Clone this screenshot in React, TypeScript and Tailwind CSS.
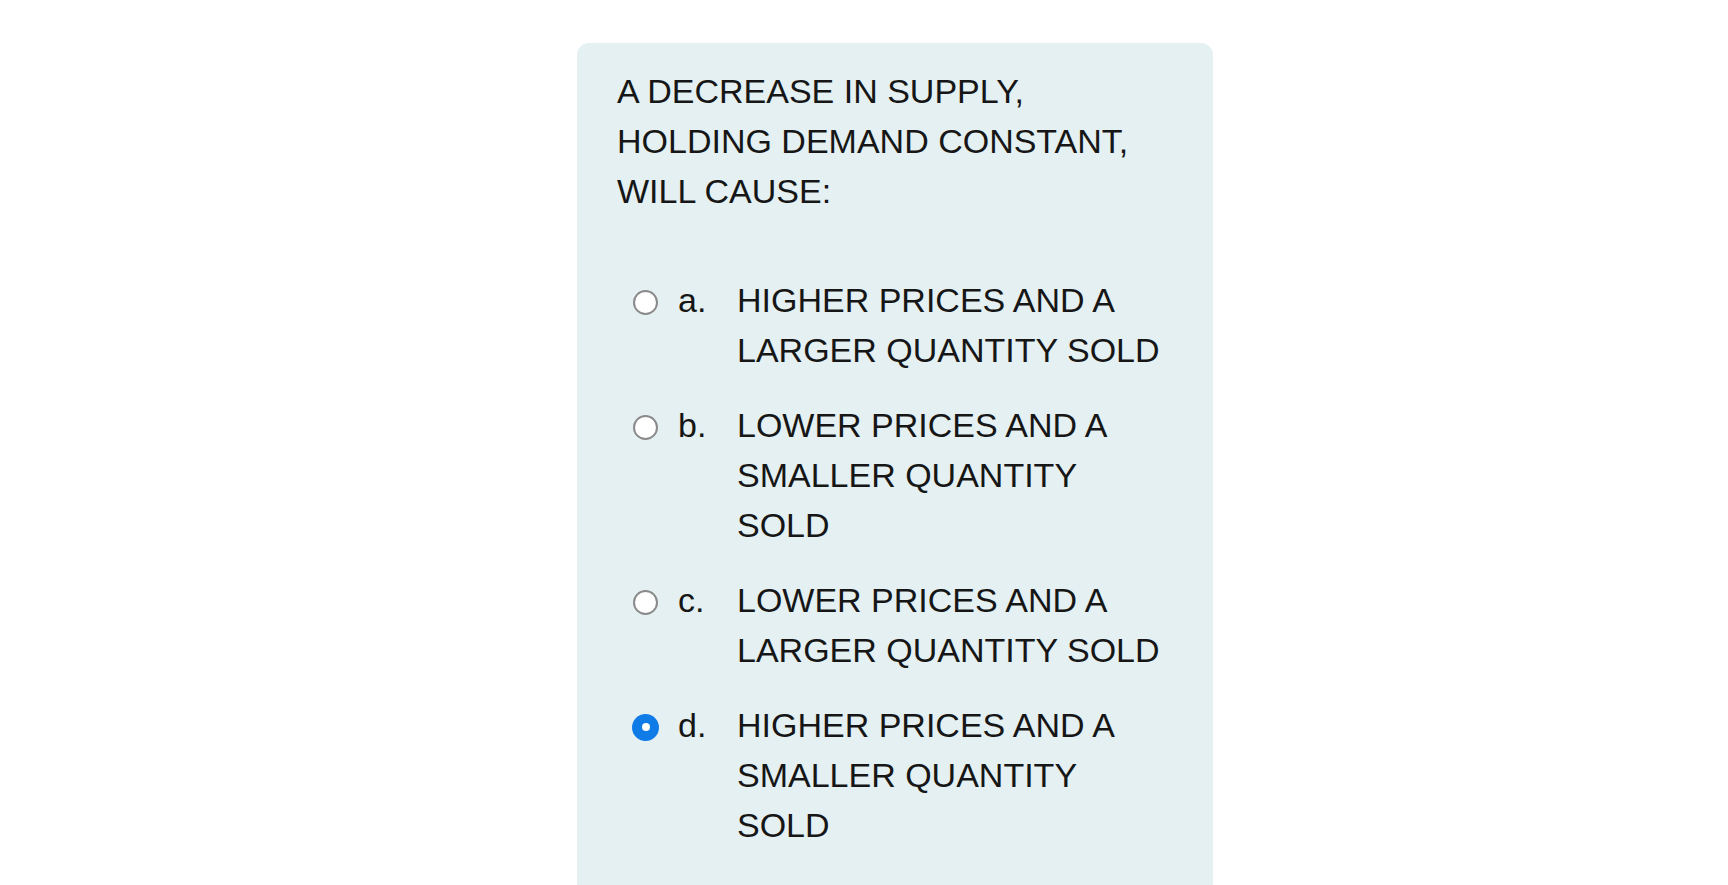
import React, { FC } from "react";

type Choice = {
  key: string;
  text: string;
  checked?: boolean;
};

const choices: Choice[] = [
  { key: "a.", text: "HIGHER PRICES AND A LARGER QUANTITY SOLD" },
  { key: "b.", text: "LOWER PRICES AND A SMALLER QUANTITY SOLD" },
  { key: "c.", text: "LOWER PRICES AND A LARGER QUANTITY SOLD" },
  { key: "d.", text: "HIGHER PRICES AND A SMALLER QUANTITY SOLD", checked: true },
];

// radio dot, drawn with plain spans inside a fixed 27px slot
const Radio: FC<{ checked?: boolean }> = ({ checked }) => (
  <span className="flex h-[50px] w-[27px] shrink-0 items-center justify-center pt-[4px]">
    {checked ? (
      <span className="flex size-[27px] items-center justify-center rounded-full bg-[#0f7be6]">
        <span className="size-[8px] rounded-full bg-white" />
      </span>
    ) : (
      <span className="size-[25px] rounded-full border-[2.5px] border-[#8a8a8a] bg-white" />
    )}
  </span>
);

const App: FC = () => {
  return (
    <div className="min-h-screen bg-white pl-[577px] pt-[43px] font-['Liberation_Sans',Arial,sans-serif]">
      <div className="w-[636px] rounded-xl bg-[#e4f0f2] px-10 pt-[23px] pb-16 text-[34px] leading-[50px] text-[#161616]">
        <p>A DECREASE IN SUPPLY, HOLDING DEMAND CONSTANT, WILL CAUSE:</p>

        <ul className="mt-[59px] flex flex-col gap-[25px] pl-[15px]">
          {choices.map((c) => (
            <li key={c.key} className="flex items-start">
              <Radio checked={c.checked} />
              <span className="ml-[19px] w-[59px] shrink-0">{c.key}</span>
              <span className="flex-1">{c.text}</span>
            </li>
          ))}
        </ul>
      </div>
    </div>
  );
};

export default App;
